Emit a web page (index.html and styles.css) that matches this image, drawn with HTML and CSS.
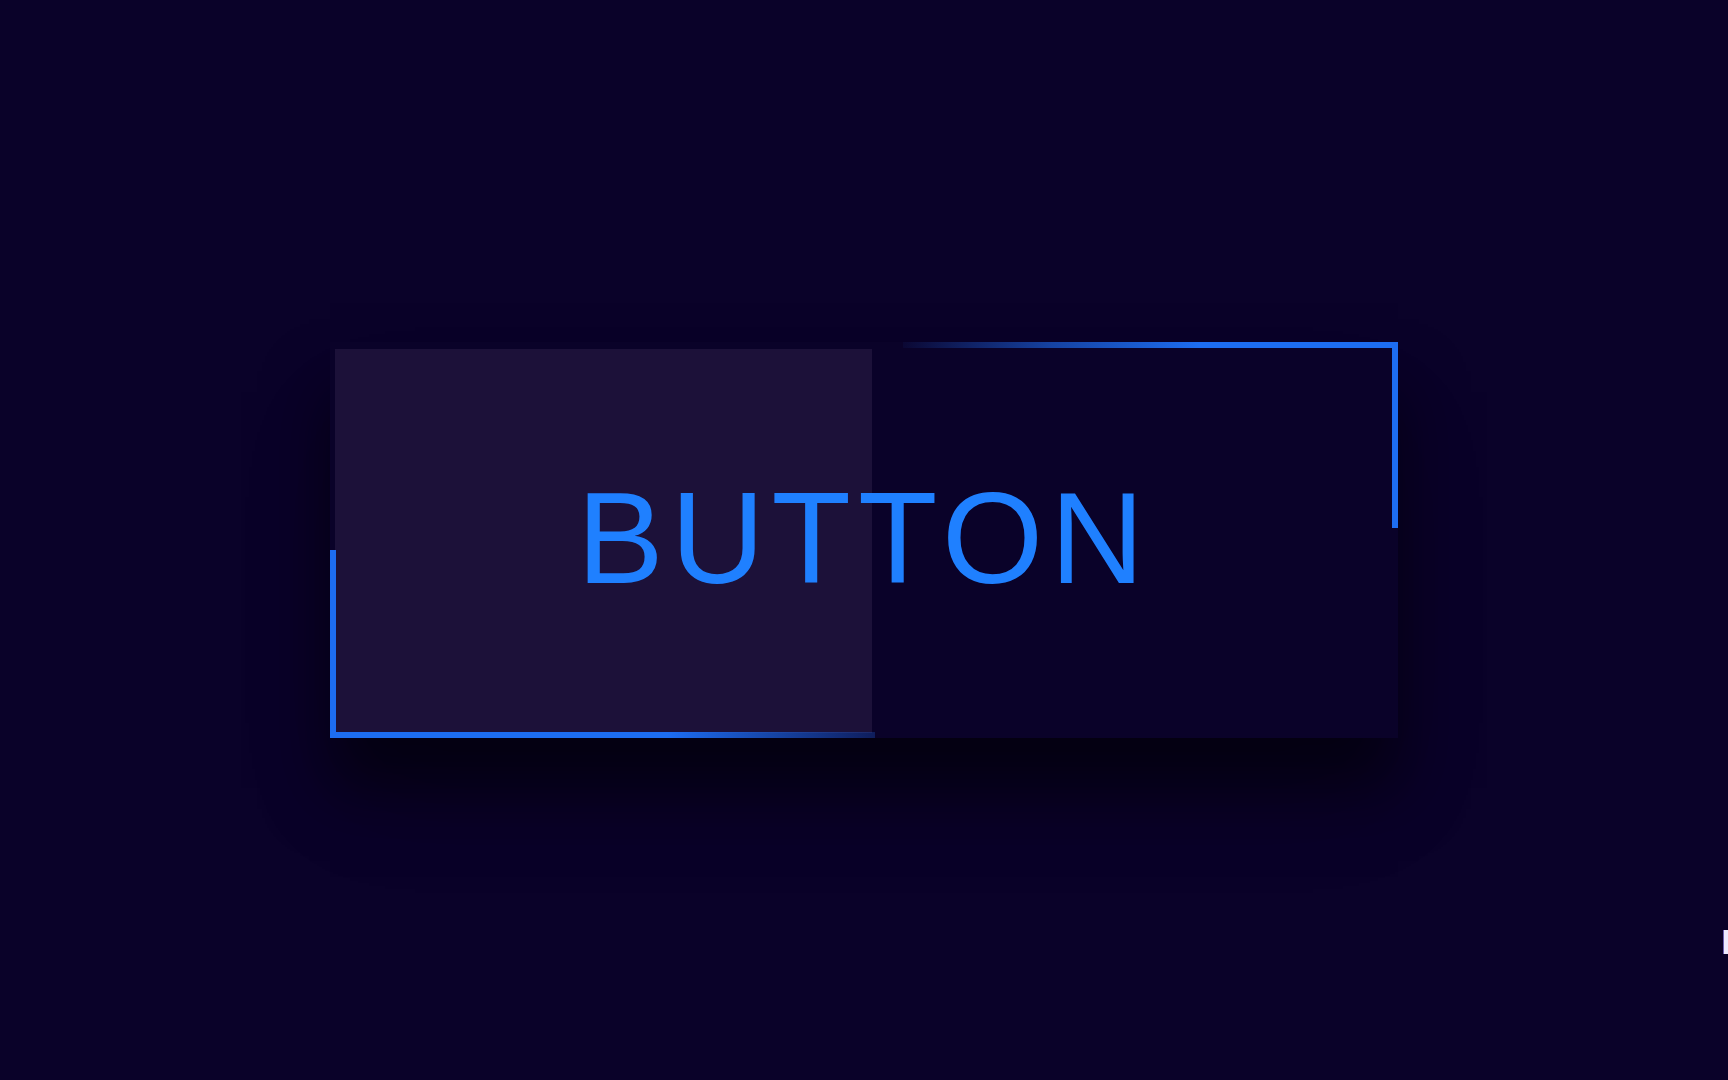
FILE: index.html
```html
<!DOCTYPE html>
<html lang="en">
<head>
<meta charset="utf-8">
<title>Button</title>
<link rel="stylesheet" href="styles.css">
</head>
<body>
<main class="stage">
  <button class="btn" type="button">
    <span class="fill"></span>
    <span class="edge edge-left"></span>
    <span class="edge edge-bottom"></span>
    <span class="edge edge-top"></span>
    <span class="edge edge-right"></span>
    <span class="label">BUTTON</span>
  </button>
  <span class="edge-mark"></span>
</main>
</body>
</html>
```
FILE: styles.css
```css
html, body {
  margin: 0;
  padding: 0;
  height: 100%;
}

body {
  background: #0a0229;
  font-family: "Liberation Sans", Arial, sans-serif;
  overflow: hidden;
}

.stage {
  position: relative;
  height: 100vh;
  display: flex;
  align-items: center;
  justify-content: center;
}

.btn {
  position: relative;
  width: 1068px;
  height: 396px;
  margin: 0;
  padding: 0;
  border: none;
  background: #0a0229;
  box-shadow: 0 50px 60px rgba(0, 0, 0, 0.5), 0 70px 100px -20px rgba(0, 0, 0, 0.2);
  display: flex;
  align-items: center;
  justify-content: center;
  cursor: pointer;
}

.fill {
  position: absolute;
  left: 5px;
  top: 7px;
  bottom: 5px;
  width: 537px;
  background: #1c1139;
}

.edge {
  position: absolute;
  background: #1d6df2;
}

.edge-left {
  left: 0;
  bottom: 0;
  width: 6px;
  height: 188px;
}

.edge-bottom {
  left: 0;
  bottom: 0;
  height: 6px;
  width: 545px;
  background: linear-gradient(to right, #1d6df2 0%, #1d6df2 62%, rgba(29, 109, 242, 0.25) 100%);
}

.edge-top {
  right: 0;
  top: 0;
  height: 6px;
  width: 495px;
  background: linear-gradient(to left, #1d6df2 0%, #1d6df2 40%, rgba(29, 109, 242, 0.6) 70%, rgba(29, 109, 242, 0.05) 100%);
}

.edge-right {
  right: 0;
  top: 0;
  width: 6px;
  height: 186px;
}

.label {
  position: relative;
  top: -2px;
  font-family: "Liberation Sans", Arial, sans-serif;
  font-size: 130px;
  font-weight: 400;
  letter-spacing: 7px;
  line-height: 1;
  color: #1f80ff;
}

.edge-mark {
  position: absolute;
  right: 0;
  top: 930px;
  width: 4px;
  height: 24px;
  background: #eeeaff;
  border-left: 1px solid #6a5fb0;
}
```
